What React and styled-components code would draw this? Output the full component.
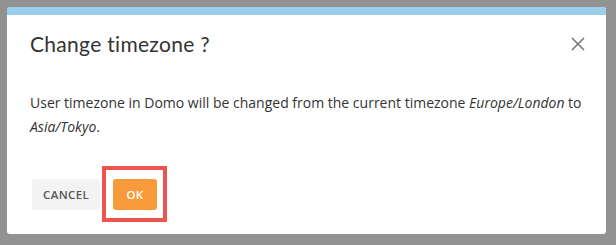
import React from "react";
import styled, { createGlobalStyle } from "styled-components";

const GlobalStyle = createGlobalStyle`
  html, body {
    margin: 0;
    padding: 0;
    background: #929292;
  }
  body {
    padding: 7px 10px 11px 7px;
    font-family: "Open Sans", "Liberation Sans", sans-serif;
  }
`;

const Modal = styled.div`
  width: 599px;
  height: 227px;
  box-sizing: border-box;
  background: #fff;
  border-radius: 3px;
  overflow: hidden;
  display: flex;
  flex-direction: column;
`;

const TopBar = styled.div`
  height: 8px;
  background: #9ccdea;
  flex-shrink: 0;
`;

const Content = styled.div`
  padding: 15px 23px 24px 23px;
  display: flex;
  flex-direction: column;
`;

const Header = styled.div`
  display: flex;
  align-items: center;
  justify-content: space-between;
`;

const Title = styled.h2`
  margin: 0;
  font-family: Lato, "Noto Sans", sans-serif;
  font-weight: 400;
  font-size: 21px;
  line-height: 28px;
  letter-spacing: 0.3px;
  color: #333;
`;

const CloseButton = styled.button`
  border: 0;
  background: none;
  padding: 0;
  margin-right: -2px;
  width: 14px;
  height: 14px;
  display: flex;
  align-items: center;
  justify-content: center;
  cursor: pointer;
`;

const Message = styled.p`
  margin: 33px 0 0 0;
  font-size: 14px;
  line-height: 24px;
  color: #333;

  em {
    font-style: italic;
  }
`;

const Footer = styled.div`
  margin-top: 40px;
  display: flex;
  align-items: center;
  gap: 13px;
  padding-left: 2px;
`;

const Button = styled.button`
  height: 31px;
  border: 0;
  border-radius: 3px;
  padding: 0 ${(p) => (p.$primary ? "0" : "11px")};
  width: ${(p) => (p.$primary ? "44px" : "68px")};
  background: ${(p) => (p.$primary ? "#f99a3b" : "#f3f3f3")};
  color: ${(p) => (p.$primary ? "#fff" : "#555")};
  font-family: "Open Sans", "Liberation Sans", sans-serif;
  font-weight: 600;
  font-size: 11.5px;
  letter-spacing: 0.4px;
  text-transform: uppercase;
  white-space: nowrap;
  cursor: pointer;
`;

const Highlight = styled.span`
  position: relative;
  display: inline-flex;

  &::after {
    content: "";
    position: absolute;
    top: -13px;
    left: -11px;
    right: -10px;
    bottom: -12px;
    border: 4px solid #ef5350;
    pointer-events: none;
  }
`;

export default function App() {
  return (
    <>
      <GlobalStyle />
      <Modal>
        <TopBar />
        <Content>
          <Header>
            <Title>Change timezone ?</Title>
            <CloseButton aria-label="Close">
              <svg width="14" height="14" viewBox="0 0 14 14">
                <path
                  d="M1 1 L13 13 M13 1 L1 13"
                  stroke="#777"
                  strokeWidth="1.6"
                  fill="none"
                />
              </svg>
            </CloseButton>
          </Header>
          <Message>
            User timezone in Domo will be changed from the current timezone{" "}
            <em>Europe/London</em> to <em>Asia/Tokyo</em>.
          </Message>
          <Footer>
            <Button>Cancel</Button>
            <Highlight>
              <Button $primary>OK</Button>
            </Highlight>
          </Footer>
        </Content>
      </Modal>
    </>
  );
}
